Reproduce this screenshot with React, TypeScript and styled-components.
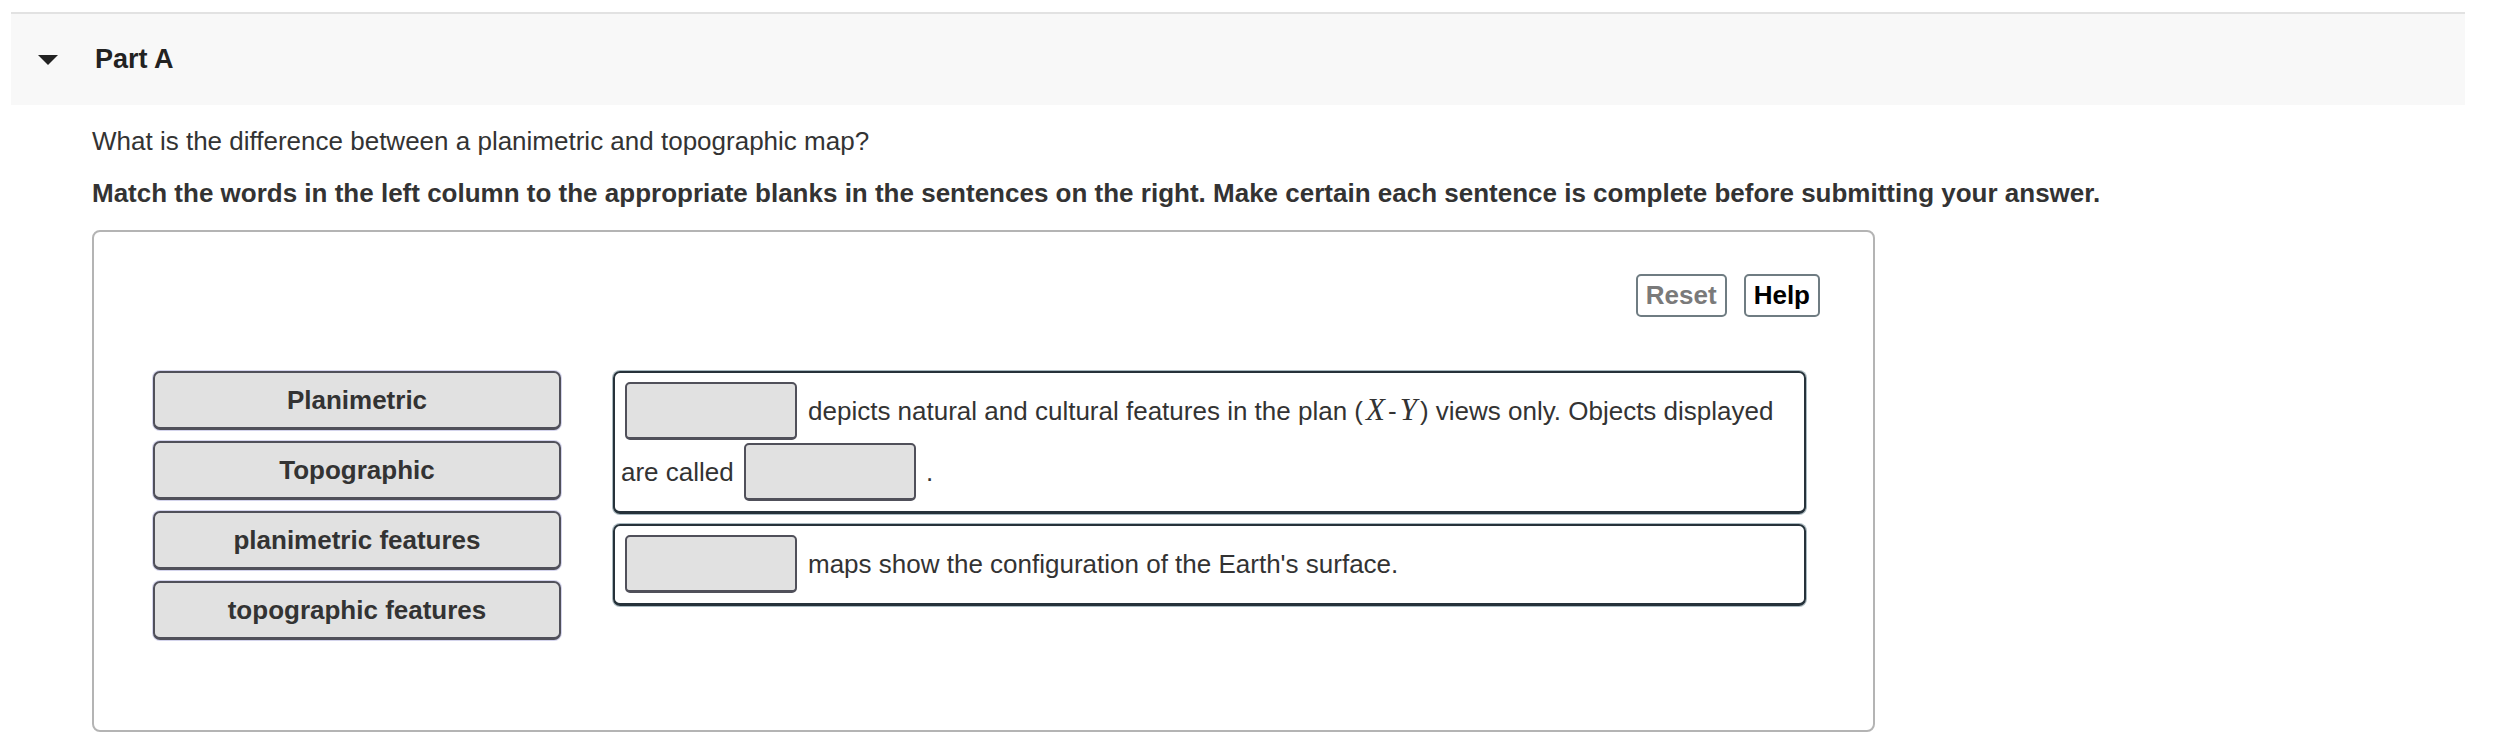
import React from 'react';
import styled, { createGlobalStyle } from 'styled-components';

const GlobalStyle = createGlobalStyle`
  body {
    margin: 0;
    padding-top: 12px;
    background: #fff;
    font-family: "Liberation Sans", Arial, Helvetica, sans-serif;
    color: #333;
  }
`;

const Page = styled.div`
  margin: 0 53px 0 11px;
`;

const PartHeader = styled.div`
  display: flex;
  align-items: center;
  height: 91px;
  border-top: 2px solid #e2e2e2;
  background: #f8f8f8;
  padding-left: 27px;
`;

const Caret = styled.span`
  width: 0;
  height: 0;
  border-left: 10px solid transparent;
  border-right: 10px solid transparent;
  border-top: 10px solid #222;
  margin-right: 37px;
  margin-top: 1px;
`;

const PartTitle = styled.h2`
  margin: 0;
  font-size: 27px;
  font-weight: bold;
  color: #222;
`;

const Body = styled.div`
  padding-left: 81px;
`;

const Question = styled.p<{ $strong?: boolean }>`
  margin: ${({ $strong }) => ($strong ? '16px 0 0' : '18px 0 0')};
  font-size: 26px;
  line-height: 36px;
  font-weight: ${({ $strong }) => ($strong ? 'bold' : 'normal')};
  color: #333;
`;

const Card = styled.div`
  margin-top: 19px;
  width: 1783px;
  height: 502px;
  box-sizing: border-box;
  border: 2px solid #b4b4b4;
  border-radius: 8px;
  padding: 42px 53px 0 59px;
`;

const Toolbar = styled.div`
  display: flex;
  justify-content: flex-end;
  gap: 17px;
`;

const ToolButton = styled.button<{ $muted?: boolean }>`
  height: 43px;
  padding: 0 8px;
  box-sizing: border-box;
  background: #fff;
  border: 2px solid #6f7c82;
  border-radius: 5px;
  font-family: "Liberation Sans", Arial, sans-serif;
  font-size: 26px;
  font-weight: bold;
  color: ${({ $muted }) => ($muted ? '#7a7a7a' : '#000')};
  cursor: pointer;
`;

const Board = styled.div`
  display: flex;
  align-items: flex-start;
  gap: 52px;
  margin-top: 54px;
`;

const WordColumn = styled.div`
  display: flex;
  flex-direction: column;
  gap: 11px;
`;

const WordTile = styled.div`
  width: 408px;
  height: 59px;
  box-sizing: border-box;
  display: flex;
  align-items: center;
  justify-content: center;
  background: #e1e1e1;
  border: 2px solid #50505a;
  border-bottom-width: 3px;
  border-radius: 7px;
  box-shadow: 0 0 0 1px #d4d4ec;
  font-size: 26px;
  font-weight: bold;
  color: #333;
`;

const SentenceColumn = styled.div`
  display: flex;
  flex-direction: column;
  gap: 10px;
`;

const SentenceBox = styled.div`
  width: 1193px;
  box-sizing: border-box;
  border: 2px solid #26323a;
  border-bottom-width: 3px;
  border-radius: 7px;
  box-shadow: 0 0 0 1px #a9b9c0;
  padding: 8px 9px 8px 6px;
  font-size: 26px;
  line-height: 61px;
  color: #333;
`;

const Blank = styled.span<{ $lead?: boolean }>`
  display: inline-block;
  width: 172px;
  height: 58px;
  box-sizing: border-box;
  vertical-align: top;
  background: #e1e1e1;
  border: 2px solid #50505a;
  border-bottom-width: 3px;
  border-radius: 5px;
  margin: ${({ $lead }) => ($lead ? '1px 11px 2px 4px' : '1px 10px 2px 3px')};
`;

const Mathvar = styled.span`
  font-family: "Liberation Serif", "Times New Roman", serif;
  font-style: italic;
  font-size: 31px;
  line-height: 1;
  padding: 0 3px;
`;

export default function App() {
  return (
    <>
      <GlobalStyle />
      <Page>
        <PartHeader>
          <Caret />
          <PartTitle>Part A</PartTitle>
        </PartHeader>
        <Body>
          <Question>What is the difference between a planimetric and topographic map?</Question>
          <Question $strong>
            Match the words in the left column to the appropriate blanks in the sentences on the right. Make certain each sentence is complete before submitting your answer.
          </Question>
          <Card>
            <Toolbar>
              <ToolButton $muted>Reset</ToolButton>
              <ToolButton>Help</ToolButton>
            </Toolbar>
            <Board>
              <WordColumn>
                <WordTile>Planimetric</WordTile>
                <WordTile>Topographic</WordTile>
                <WordTile>planimetric features</WordTile>
                <WordTile>topographic features</WordTile>
              </WordColumn>
              <SentenceColumn>
                <SentenceBox>
                  <Blank $lead />
                  depicts natural and cultural features in the plan (<Mathvar>X</Mathvar>-<Mathvar>Y</Mathvar>) views only. Objects displayed are called{' '}
                  <Blank />.
                </SentenceBox>
                <SentenceBox>
                  <Blank $lead />
                  maps show the configuration of the Earth's surface.
                </SentenceBox>
              </SentenceColumn>
            </Board>
          </Card>
        </Body>
      </Page>
    </>
  );
}
